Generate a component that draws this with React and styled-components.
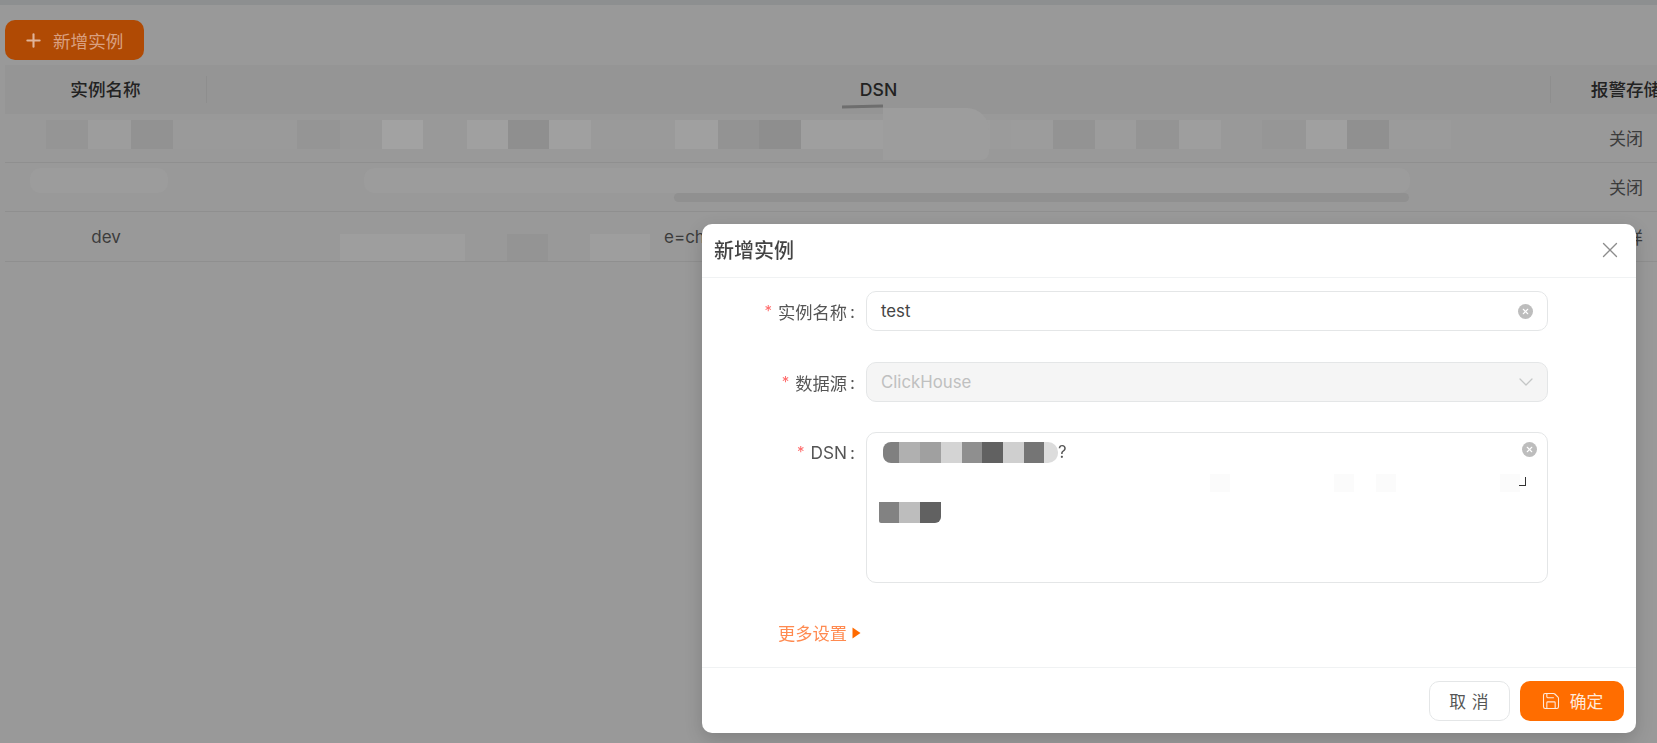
import React from "react";
import styled, { createGlobalStyle } from "styled-components";
import { Plus, X, ChevronDown, Save } from "lucide-react";

const Global = createGlobalStyle`
  html, body { margin: 0; padding: 0; height: 100%; overflow: hidden; background: #999999; }
  * { box-sizing: border-box; }
  body { font-family: Inter, "Noto Sans CJK SC", sans-serif; }
`;

const Page = styled.div`
  width: 1657px;
  height: 743px;
  overflow: hidden;
  background: #999999;
`;
const TopStrip = styled.div`
  height: 5px;
  background: #8d8f90;
`;
const Toolbar = styled.div`
  display: flex;
  padding: 15px 5px 5px;
`;
const AddButton = styled.button`
  display: flex;
  align-items: center;
  gap: 9px;
  width: 139px;
  height: 40px;
  padding: 0 0 0 18px;
  border: none;
  border-radius: 10px;
  background: #b04a04;
  color: #d9a080;
  font: 400 17.6px "Noto Sans CJK SC", sans-serif;
`;
const Table = styled.div`
  width: 1700px;
  margin-left: 5px;
`;
const HeaderRow = styled.div`
  position: relative;
  display: grid;
  grid-template-columns: 202px 1344px 150px;
  height: 49px;
  background: #959595;
  align-items: center;
`;
const HeadCell = styled.div`
  text-align: center;
  color: #222;
  font: 500 17.6px Inter, "Noto Sans CJK SC", sans-serif;
  height: 27px;
  line-height: 27px;
  white-space: nowrap;
  border-right: ${(p) => (p.$divider ? "1px solid #8e8e8e" : "none")};
`;
const HeadMark = styled.span`
  position: absolute;
  left: 837px;
  top: 40px;
  width: 41px;
  height: 3px;
  background: #6e6e6e;
  transform: rotate(-1.5deg);
`;
const Row = styled.div`
  position: relative;
  display: grid;
  grid-template-columns: 202px 1344px 150px;
  height: ${(p) => p.$h}px;
  align-items: center;
  border-bottom: 1px solid #8f8f8f;
`;
const Cell = styled.div`
  text-align: ${(p) => (p.$left ? "left" : "center")};
  padding-left: ${(p) => p.$left || 0}px;
  padding-bottom: ${(p) => (p.$raised ? 2 : 0)}px;
  color: #3c3c3c;
  font: 400 17px Inter, "Noto Sans CJK SC", sans-serif;
  white-space: nowrap;
`;
const Strip = styled.div`
  position: absolute;
  left: ${(p) => p.$x}px;
  top: ${(p) => p.$y}px;
  height: ${(p) => p.$h}px;
  display: flex;
`;
const Tile = styled.span`
  display: block;
  height: 100%;
  width: ${(p) => p.$w}px;
  background: ${(p) => p.$c};
  border-radius: ${(p) => p.$r || "0"};
`;

const Modal = styled.section`
  position: fixed;
  left: 702px;
  top: 224px;
  width: 934px;
  height: 509px;
  display: flex;
  flex-direction: column;
  background: #fff;
  border-radius: 10px;
  box-shadow: 0 6px 18px rgba(0, 0, 0, 0.16);
`;
const ModalHead = styled.header`
  flex: none;
  height: 54px;
  display: flex;
  align-items: center;
  justify-content: space-between;
  padding: 0 13px 2px 12px;
  border-bottom: 1px solid #f0f2f3;
`;
const Title = styled.h2`
  margin: 0;
  color: #444;
  font: 500 20px "Noto Sans CJK SC", sans-serif;
`;
const CloseBtn = styled.span`
  display: flex;
  color: #8c8c8c;
`;
const Form = styled.div`
  flex: 1;
  display: flex;
  flex-direction: column;
  padding-top: 13px;
`;
const Field = styled.div`
  display: grid;
  grid-template-columns: 155px 682px;
  column-gap: 9px;
  margin-bottom: ${(p) => p.$mb}px;
`;
const Label = styled.label`
  display: flex;
  justify-content: flex-end;
  align-items: center;
  height: 40px;
  color: #555;
  font: 400 17.25px Inter, "Noto Sans CJK SC", sans-serif;
  white-space: nowrap;
`;
const Colon = styled.span`
  margin: 0 2px 0 3px;
`;
const Star = styled.span`
  color: #ff6b6b;
  font: 400 15px Inter, sans-serif;
  margin-right: 6px;
  position: relative;
  top: -1px;
`;
const Control = styled.div`
  position: relative;
  height: 40px;
  display: flex;
  align-items: center;
  justify-content: space-between;
  padding: 0 14px;
  border: 1.5px solid #e4e6e7;
  border-radius: 10px;
  background: ${(p) => (p.$disabled ? "#f5f5f5" : "#fff")};
  color: ${(p) => (p.$disabled ? "#bfc0c0" : "#444")};
  font: 400 16.8px Inter, "Noto Sans CJK SC", sans-serif;
`;
const ClearDot = styled.span`
  width: 15px;
  height: 15px;
  border-radius: 50%;
  background: #bdbdbd;
  display: flex;
  align-items: center;
  justify-content: center;
  color: #fff;
`;
const Arrow = styled.span`
  display: flex;
  margin-right: -5px;
  color: #c4c6c6;
`;
const Area = styled.div`
  position: relative;
  height: 151px;
  padding: 8px 12px;
  border: 1.5px solid #e4e6e7;
  border-radius: 10px;
  background: #fff;
  color: #555;
  font: 400 16.8px Inter, sans-serif;
`;
const AreaLine = styled.div`
  height: ${(p) => p.$h}px;
  display: flex;
  align-items: center;
  margin-left: ${(p) => p.$ml || 0}px;
`;
const Redaction = styled.div`
  display: flex;
  height: 21px;
  overflow: hidden;
  border-radius: ${(p) => p.$radius};
`;
const AreaClear = styled(ClearDot)`
  position: absolute;
  right: 10px;
  top: 9px;
`;
const ResizeMark = styled.span`
  position: absolute;
  right: 21px;
  top: 44px;
  width: 7px;
  height: 9px;
  border-right: 1.5px solid #333;
  border-bottom: 1.5px solid #333;
`;
const FaintCells = styled.div`
  display: flex;
  height: 18px;
`;
const Faint = styled.span`
  width: 20px;
  margin-left: ${(p) => p.$gap}px;
  background: #fbfbfb;
`;
const More = styled.div`
  display: flex;
  align-items: center;
  gap: 5px;
  margin-left: 76px;
  color: #ff8a50;
  font: 400 17.25px "Noto Sans CJK SC", sans-serif;
`;
const Footer = styled.footer`
  flex: none;
  height: 66px;
  display: flex;
  justify-content: flex-end;
  align-items: center;
  gap: 10px;
  padding: 0 12px 0 0;
  border-top: 1px solid #f0f2f3;
`;
const CancelBtn = styled.button`
  width: 81px;
  height: 40px;
  border: 1.5px solid #e4e6e7;
  border-radius: 10px;
  background: #fff;
  color: #555;
  font: 400 16.8px "Noto Sans CJK SC", sans-serif;
  letter-spacing: 1px;
`;
const OkBtn = styled.button`
  width: 104px;
  height: 40px;
  display: flex;
  align-items: center;
  justify-content: center;
  gap: 9px;
  border: none;
  border-radius: 10px;
  background: #ff6d00;
  color: #ffe9db;
  font: 400 16.8px "Noto Sans CJK SC", sans-serif;
`;

const row1Left = [
  [42, "#959595"], [43, "#9d9d9d"], [42, "#929292"], [124, "#9a9a9a"], [43, "#959595"], [42, "#989898"],
  [41, "#a2a2a2"], [44, "#999999"], [41, "#a0a0a0"], [41, "#8f8f8f"], [42, "#a0a0a0"], [84, "#9a9a9a"],
  [43, "#a0a0a0"], [41, "#939393"], [42, "#8e8e8e"], [83, "#9f9f9f"], [106, "#9d9d9d"], [21, "#9b9b9b"],
  [42, "#9c9c9c"], [42, "#939393"], [41, "#9c9c9c"], [43, "#949494"], [42, "#9e9e9e"], [41, "#999999"],
  [44, "#969696"], [41, "#a0a0a0"], [42, "#909090"], [62, "#9b9b9b"],
];
const dsnCells = [
  [16, "#808080"], [21, "#b0b0b0"], [21, "#a0a0a0"], [21, "#d4d4d4"], [20, "#8f8f8f"], [21, "#616161"],
  [21, "#cfcfcf"], [20, "#757575"], [14, "#dcdcdc"],
];
const dsnCells2 = [[20, "#828282"], [21, "#bdbdbd"], [21, "#616161"]];

export default function App() {
  return (
    <Page>
      <Global />
      <TopStrip />
      <Toolbar>
        <AddButton>
          <Plus size={21} strokeWidth={2.4} color="#e0b49a" />
          新增实例
        </AddButton>
      </Toolbar>
      <Table>
        <HeaderRow>
          <HeadCell $divider>实例名称</HeadCell>
          <HeadCell $divider>DSN</HeadCell>
          <HeadCell>报警存储</HeadCell>
          <HeadMark />
        </HeaderRow>
        <Row $h={49}>
          <Cell />
          <Cell />
          <Cell $raised>关闭</Cell>
          <Strip $x={41} $y={6} $h={29}>
            {row1Left.map(([w, c], i) => (
              <Tile key={i} $w={w} $c={c} />
            ))}
          </Strip>
          <Strip $x={878} $y={-6} $h={52}>
            <Tile $w={106} $c="#9d9d9d" $r="0 22px 8px 0" />
          </Strip>
        </Row>
        <Row $h={49}>
          <Cell />
          <Cell />
          <Cell $raised>关闭</Cell>
          <Strip $x={25} $y={5} $h={25}>
            <Tile $w={138} $c="#9c9c9c" $r="10px" />
          </Strip>
          <Strip $x={359} $y={5} $h={25}>
            <Tile $w={1046} $c="#9c9c9c" $r="10px" />
          </Strip>
          <Strip $x={669} $y={30} $h={9}>
            <Tile $w={735} $c="#909090" $r="5px" />
          </Strip>
        </Row>
        <Row $h={50}>
          <Cell>dev</Cell>
          <Cell $left={457}>e=ch</Cell>
          <Cell>取样</Cell>
          <Strip $x={335} $y={22} $h={27}>
            <Tile $w={125} $c="#9e9e9e" />
            <Tile $w={42} $c="#999999" />
            <Tile $w={41} $c="#949494" />
            <Tile $w={42} $c="#999999" />
            <Tile $w={60} $c="#9e9e9e" />
          </Strip>
        </Row>
      </Table>

      <Modal>
        <ModalHead>
          <Title>新增实例</Title>
          <CloseBtn>
            <X size={26} strokeWidth={1.25} />
          </CloseBtn>
        </ModalHead>
        <Form>
          <Field $mb={31}>
            <Label>
              <Star>*</Star>实例名称<Colon>:</Colon>
            </Label>
            <Control>
              test
              <ClearDot>
                <X size={9} strokeWidth={3} />
              </ClearDot>
            </Control>
          </Field>
          <Field $mb={30}>
            <Label>
              <Star>*</Star>数据源<Colon>:</Colon>
            </Label>
            <Control $disabled>
              ClickHouse
              <Arrow>
                <ChevronDown size={24} strokeWidth={1.25} />
              </Arrow>
            </Control>
          </Field>
          <Field $mb={37}>
            <Label>
              <Star>*</Star>DSN<Colon>:</Colon>
            </Label>
            <Area>
              <AreaLine $h={22} $ml={4}>
                <Redaction $radius="8px 10px 10px 8px">
                  {dsnCells.map(([w, c], i) => (
                    <Tile key={i} $w={w} $c={c} />
                  ))}
                </Redaction>
                ?
              </AreaLine>
              <AreaLine $h={39}>
                <FaintCells>
                  <Faint $gap={331} />
                  <Faint $gap={104} />
                  <Faint $gap={22} />
                  <Faint $gap={104} />
                </FaintCells>
              </AreaLine>
              <AreaLine $h={21}>
                <Redaction $radius="0 0 6px 2px">
                  {dsnCells2.map(([w, c], i) => (
                    <Tile key={i} $w={w} $c={c} />
                  ))}
                </Redaction>
              </AreaLine>
              <AreaClear>
                <X size={9} strokeWidth={3} />
              </AreaClear>
              <ResizeMark />
            </Area>
          </Field>
          <More>
            更多设置
            <svg width="9" height="12" viewBox="0 0 9 12">
              <path d="M0.5 0.5 L8.5 6 L0.5 11.5 Z" fill="#ff6a00" />
            </svg>
          </More>
        </Form>
        <Footer>
          <CancelBtn>取 消</CancelBtn>
          <OkBtn>
            <Save size={20} strokeWidth={1.3} />
            确定
          </OkBtn>
        </Footer>
      </Modal>
    </Page>
  );
}
